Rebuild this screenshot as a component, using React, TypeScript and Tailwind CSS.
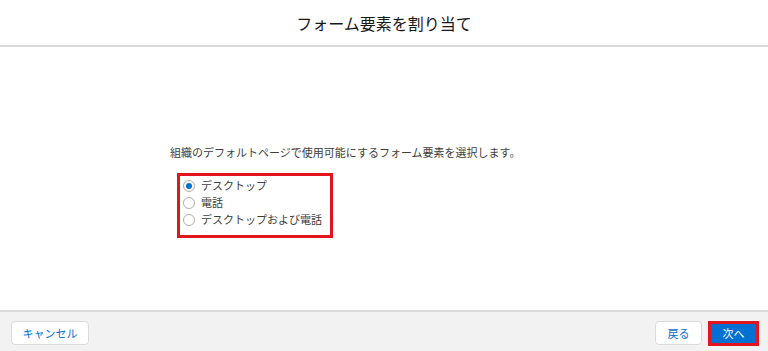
import React, { useState } from 'react';

const options = ['デスクトップ', '電話', 'デスクトップおよび電話'];

const App: React.FC = () => {
  const [selected, setSelected] = useState(0);

  return (
    <div
      className="h-[351px] w-full flex flex-col bg-white text-[#3e3e3c] overflow-hidden"
      style={{ fontFamily: '"Noto Sans CJK JP", "Noto Sans", sans-serif' }}
    >
      <div className="h-[47px] shrink-0 border-b-2 border-[#dddbda] flex items-center justify-center">
        <h1 className="text-[16px] leading-none text-[#181818] pt-[1px]">フォーム要素を割り当て</h1>
      </div>

      <div className="flex-1 pl-[170px] pt-[97px]">
        <p className="text-[11px] leading-[16px] text-[#3e3e3c]">
          組織のデフォルトページで使用可能にするフォーム要素を選択します。
        </p>
        <div className="mt-[13px] ml-[7px] w-[156px] h-[65px] border-[3px] border-[#e3141c] pl-[3px] pt-[1px]">
          {options.map((label, i) => (
            <label key={label} className="h-[17px] flex items-center gap-[6px] cursor-pointer">
              <span
                className="w-[12px] h-[12px] rounded-full border border-[#b0adab] bg-white flex items-center justify-center shrink-0"
                onClick={() => setSelected(i)}
              >
                {selected === i && <span className="w-[6px] h-[6px] rounded-full bg-[#0070d2]" />}
              </span>
              <span className="text-[11px] leading-none text-[#3e3e3c]">{label}</span>
            </label>
          ))}
        </div>
      </div>

      <div className="h-[41px] shrink-0 border-t-2 border-[#dddbda] bg-[#f3f2f2] flex items-start justify-between pl-[11px] pr-[9px] pt-[9px]">
        <button className="w-[78px] h-[24px] rounded-[4px] border border-[#dddbda] bg-white text-[11px] text-[#0070d2] flex items-center justify-center">
          キャンセル
        </button>
        <div className="flex items-start gap-[6px]">
          <button className="w-[47px] h-[24px] rounded-[4px] border border-[#dddbda] bg-white text-[11px] text-[#0070d2] flex items-center justify-center">
            戻る
          </button>
          <button className="w-[51px] h-[25px] border-[3px] border-[#e3141c] bg-[#0070d2] text-[11px] text-white flex items-center justify-center">
            次へ
          </button>
        </div>
      </div>
    </div>
  );
};

export default App;
